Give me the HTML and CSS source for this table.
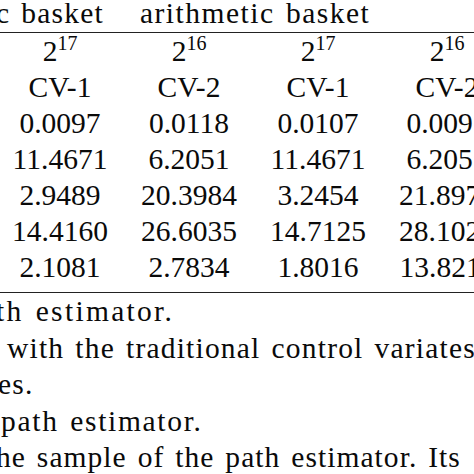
FILE: index.html
```html
<!DOCTYPE html>
<html lang="en">
<head>
<meta charset="utf-8">
<title>Table</title>
<link rel="stylesheet" href="styles.css">
</head>
<body>
<div class="page">
  <div class="head">
    <span class="head-a">c basket</span>
    <span class="head-b">arithmetic basket</span>
  </div>
  <div class="table">
    <div class="grid">
      <div class="cell">2<sup class="exp">17</sup></div>
      <div class="cell">2<sup class="exp">16</sup></div>
      <div class="cell">2<sup class="exp">17</sup></div>
      <div class="cell">2<sup class="exp">16</sup></div>

      <div class="cell">CV-1</div>
      <div class="cell">CV-2</div>
      <div class="cell">CV-1</div>
      <div class="cell">CV-2</div>

      <div class="cell">0.0097</div>
      <div class="cell">0.0118</div>
      <div class="cell">0.0107</div>
      <div class="cell">0.0097</div>

      <div class="cell">11.4671</div>
      <div class="cell">6.2051</div>
      <div class="cell">11.4671</div>
      <div class="cell">6.2051</div>

      <div class="cell">2.9489</div>
      <div class="cell">20.3984</div>
      <div class="cell">3.2454</div>
      <div class="cell">21.8971</div>

      <div class="cell">14.4160</div>
      <div class="cell">26.6035</div>
      <div class="cell">14.7125</div>
      <div class="cell">28.1021</div>

      <div class="cell">2.1081</div>
      <div class="cell">2.7834</div>
      <div class="cell">1.8016</div>
      <div class="cell">13.8211</div>
    </div>
  </div>
  <div class="notes">
    <p class="note note-1">th estimator.</p>
    <p class="note note-2">with the traditional control variates</p>
    <p class="note note-3">es.</p>
    <p class="note note-4">path estimator.</p>
    <p class="note note-5">he sample of the path estimator. Its</p>
  </div>
</div>
</body>
</html>
```

FILE: styles.css
```css
html, body {
  margin: 0;
  padding: 0;
  background: #ffffff;
}

.page {
  width: 474px;
  height: 474px;
  overflow: hidden;
  font-family: "Liberation Serif", "Times New Roman", serif;
  font-size: 29.5px;
  color: #0a0a0a;
  white-space: nowrap;
}

.head {
  display: flex;
  gap: 36px;
  height: 26px;
  line-height: 26px;
  padding-bottom: 6px;
  border-bottom: 1px solid #222222;
  letter-spacing: 1.2px;
  word-spacing: 2.5px;
}

.head-a {
  margin-left: -4px;
}

.head-b {
  letter-spacing: 1.5px;
}

.table {
  padding-bottom: 7px;
  border-bottom: 1px solid #222222;
}

.grid {
  display: grid;
  grid-template-columns: repeat(4, 129px);
  margin-left: -4.5px;
  line-height: 36px;
  justify-items: center;
}

.cell {
  text-align: center;
}

.exp {
  font-size: 20px;
  line-height: 0;
  vertical-align: 11px;
}

.notes {
  line-height: 36.5px;
  letter-spacing: 1.2px;
  word-spacing: 2.5px;
}

.note {
  margin: 0;
}

.note-1 { margin-left: -4px; letter-spacing: 2.3px; }
.note-2 { margin-left: 7px; }
.note-3 { margin-left: -2px; }
.note-4 { margin-left: 1px; letter-spacing: 1.7px; }
.note-5 { margin-left: -4px; letter-spacing: 1.05px; }
```
